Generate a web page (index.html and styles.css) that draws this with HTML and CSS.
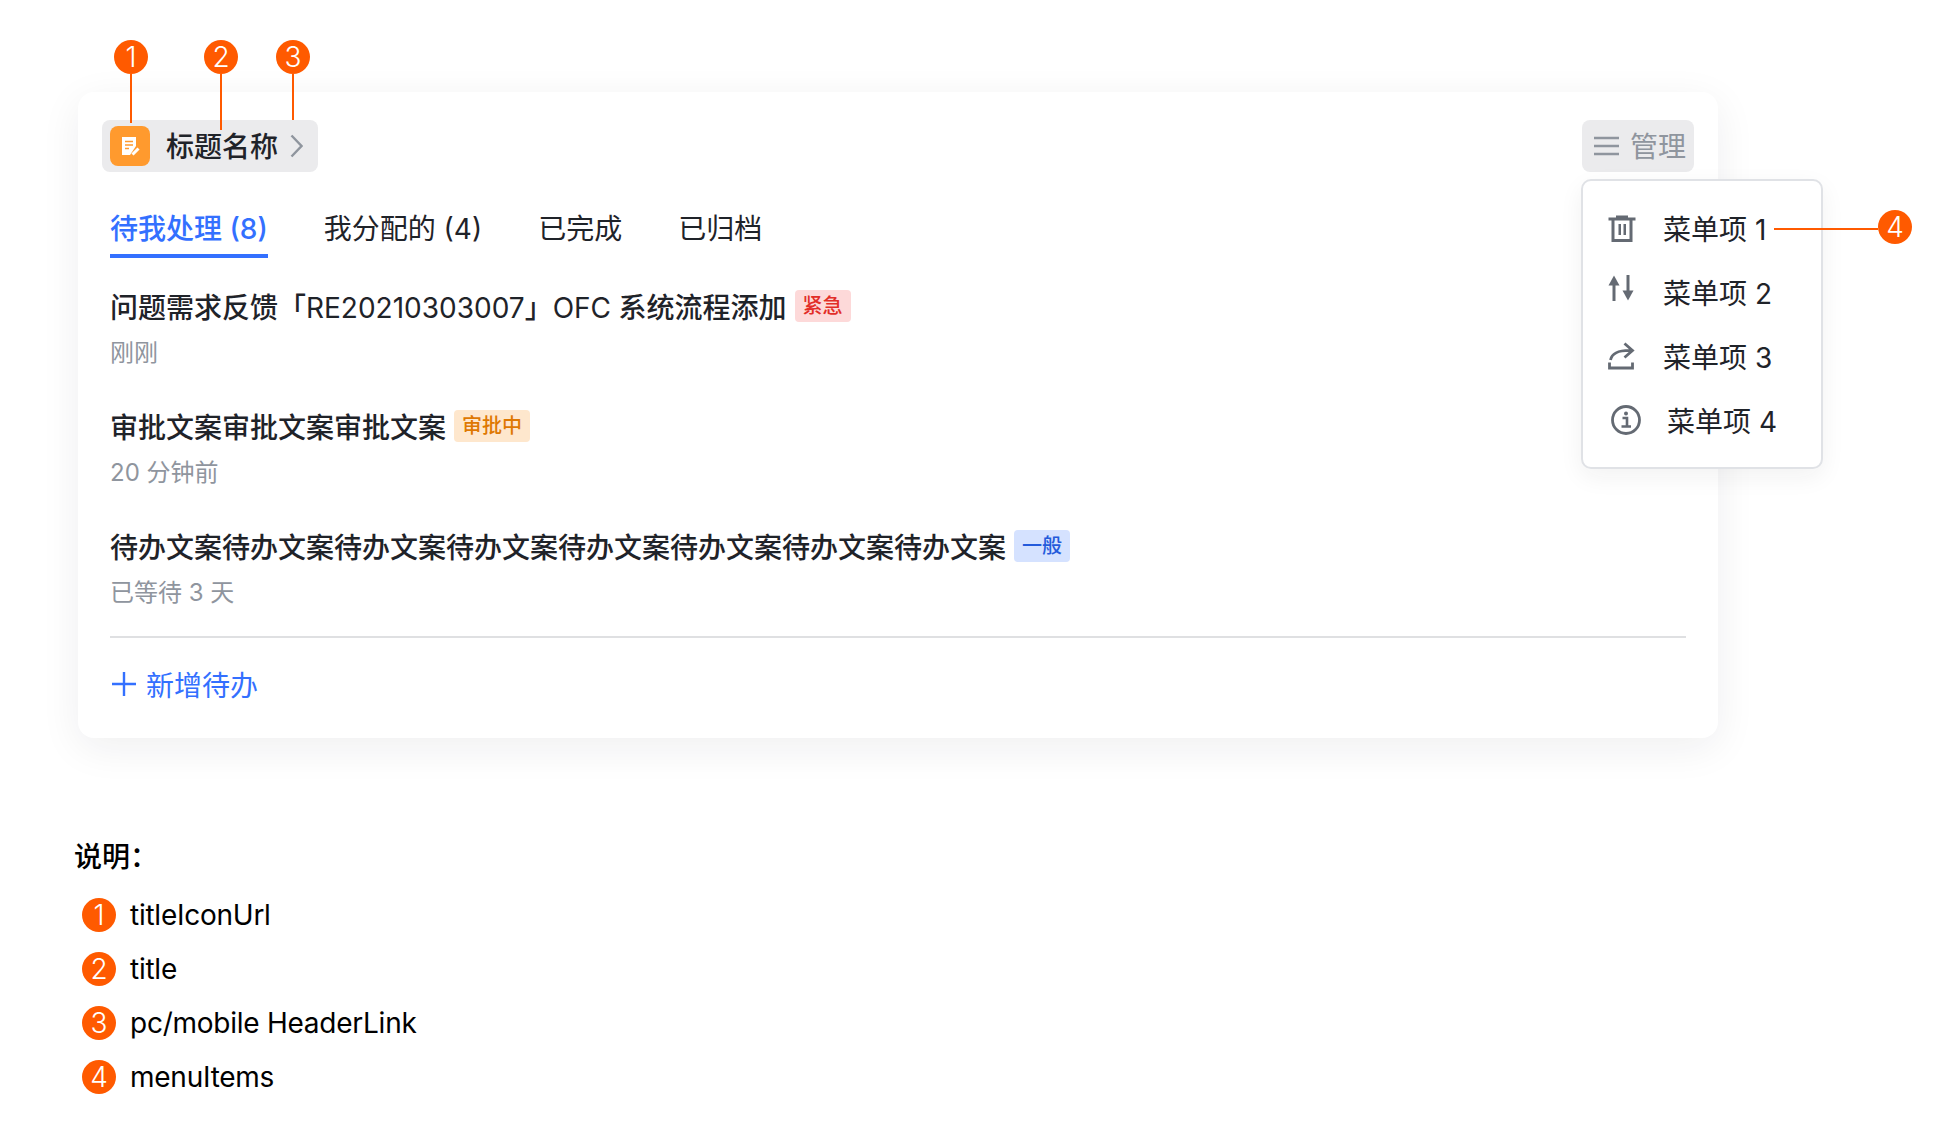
FILE: index.html
```html
<!DOCTYPE html>
<html lang="zh-CN">
<head>
<meta charset="utf-8">
<title>待办卡片</title>
<link rel="stylesheet" href="styles.css">
</head>
<body>
<main class="page">
  <section class="card">
    <header class="card-head">
      <div class="title-chip">
        <span class="title-icon">
          <svg width="20" height="20" viewBox="0 0 20 20"><path d="M2 1h14v9l-6 9H2z" fill="#fff"/><path d="M5 5.500h8M5 9h8M5 12.500h4" stroke="#ff9a2e" stroke-width="1.600" fill="none"/><path d="M12.500 18.500l6-6" stroke="#fff" stroke-width="3" fill="none"/></svg>
        </span>
        <span class="title-text">标题名称</span>
        <svg class="chevron" width="13" height="24" viewBox="0 0 13 24"><path d="M1.500 1.500l10 10.500-10 10.500" stroke="#8f959e" stroke-width="2.400" fill="none"/></svg>
      </div>
      <div class="manage">
        <svg width="25" height="20" viewBox="0 0 25 20"><path d="M0 2h25M0 10h25M0 18h25" stroke="#8f959e" stroke-width="2.400" fill="none"/></svg>
        <span class="manage-text">管理</span>
      </div>
    </header>
    <nav class="tabs">
      <span class="tab active">待我处理 (8)</span>
      <span class="tab">我分配的 (4)</span>
      <span class="tab">已完成</span>
      <span class="tab">已归档</span>
    </nav>
    <ul class="rows">
      <li class="row">
        <div class="row-title"><span>问题需求反馈「<span class="latin">RE20210303007</span>」<span class="latin">OFC</span> 系统流程添加</span><span class="tag tag-red">紧急</span></div>
        <div class="row-sub">刚刚</div>
      </li>
      <li class="row">
        <div class="row-title">审批文案审批文案审批文案<span class="tag tag-orange">审批中</span></div>
        <div class="row-sub">20 分钟前</div>
      </li>
      <li class="row">
        <div class="row-title">待办文案待办文案待办文案待办文案待办文案待办文案待办文案待办文案<span class="tag tag-blue">一般</span></div>
        <div class="row-sub">已等待 3 天</div>
      </li>
    </ul>
    <footer class="card-foot">
      <svg width="24" height="24" viewBox="0 0 24 24"><path d="M12 0v24M0 12h24" stroke="#3370ff" stroke-width="2.400" fill="none"/></svg>
      <span>新增待办</span>
    </footer>
  </section>

  <div class="menu">
    <div class="menu-item">
      <svg class="mi" width="28" height="28" viewBox="0 0 28 28"><path d="M8 4.500V1.500h12v3zM0.500 3.500h27v3H0.500z" fill="#646a73"/><path d="M5 5v21.500h18V5" stroke="#646a73" stroke-width="3" fill="none"/><path d="M10.500 10h2.500v11h-2.500zM15.500 10H18v11h-2.500z" fill="#646a73"/></svg>
      <span>菜单项 1</span>
    </div>
    <div class="menu-item">
      <svg class="mi mi-up" width="28" height="28" viewBox="0 0 28 28"><path d="M6 27V10" stroke="#646a73" stroke-width="3" fill="none"/><path d="M6 1.500l5.500 10h-11z" fill="#646a73"/><path d="M20 1v17" stroke="#646a73" stroke-width="3" fill="none"/><path d="M20 26.500l-5.500-10h11z" fill="#646a73"/></svg>
      <span>菜单项 2</span>
    </div>
    <div class="menu-item">
      <svg class="mi" width="28" height="28" viewBox="0 0 28 28"><path d="M2.500 18C4 11 10 8 24 8.500M16.500 1.500l8 7-8 7M1.500 20.500v5.500h23v-5.500" stroke="#646a73" stroke-width="2.800" fill="none"/></svg>
      <span>菜单项 3</span>
    </div>
    <div class="menu-item menu-item-info">
      <svg class="mi" width="30" height="30" viewBox="0 0 30 30"><circle cx="15" cy="15" r="13.500" stroke="#646a73" stroke-width="2.800" fill="none"/><circle cx="15" cy="8.500" r="2" fill="#646a73"/><path d="M11.500 13h4.500v8.500M10.500 21.500h9.500" stroke="#646a73" stroke-width="2.600" fill="none"/></svg>
      <span>菜单项 4</span>
    </div>
  </div>

  <span class="pin pin-v pin-1"><span class="dot">1</span></span>
  <span class="pin pin-v pin-2"><span class="dot">2</span></span>
  <span class="pin pin-v pin-3"><span class="dot">3</span></span>
  <span class="pin pin-h"><span class="dot">4</span></span>

  <section class="legend">
    <h2 class="legend-title">说明：</h2>
    <ul class="legend-list">
      <li class="legend-item"><span class="dot">1</span><span class="legend-text">titleIconUrl</span></li>
      <li class="legend-item"><span class="dot">2</span><span class="legend-text">title</span></li>
      <li class="legend-item"><span class="dot">3</span><span class="legend-text">pc/mobile HeaderLink</span></li>
      <li class="legend-item"><span class="dot">4</span><span class="legend-text">menuItems</span></li>
    </ul>
  </section>
</main>
</body>
</html>
```
FILE: styles.css
```css
* { box-sizing: border-box; }
html, body { margin: 0; background: #fff; }
body { font-family: Inter, "Noto Sans CJK SC", sans-serif; color: #1f2329; overflow: hidden; }
ul { list-style: none; margin: 0; padding: 0; }
.page { position: relative; width: 1948px; height: 1140px; padding: 92px 0 0 78px; }

.card { width: 1640px; height: 646px; padding: 28px 32px 0; border-radius: 16px; background: #fff; box-shadow: 0 10px 40px rgba(31, 35, 41, .07); }
.card-head { display: flex; justify-content: space-between; align-items: center; height: 52px; margin-left: -8px; margin-right: -8px; }
.title-chip { display: flex; align-items: center; width: 216px; height: 52px; padding-left: 8px; border-radius: 8px; background: #ebebed; }
.title-icon { display: flex; align-items: center; justify-content: center; width: 40px; height: 40px; margin-right: 16px; border-radius: 8px; background: #ff9a2e; }
.title-text { padding-top: 2px; font-size: 28px; font-weight: 500; line-height: 40px; }
.chevron { margin-left: 12px; }
.manage { display: flex; align-items: center; gap: 11px; width: 112px; height: 52px; padding-left: 12px; border-radius: 8px; background: #ebebed; color: #8f959e; font-size: 28px; line-height: 40px; }
.manage-text { padding-top: 2px; }

.tabs { display: flex; gap: 56px; margin-top: 28px; }
.tab { height: 58px; padding-top: 7px; font-size: 28px; line-height: 44px; }
.tab.active { color: #3370ff; font-weight: 500; border-bottom: 4px solid #3370ff; }

.rows { display: flex; flex-direction: column; gap: 32px; margin-top: 26px; padding-bottom: 24px; border-bottom: 2px solid #dfe0e2; }
.row-title { display: flex; align-items: center; height: 44px; font-size: 28px; font-weight: 500; white-space: nowrap; }
.latin { font-weight: 400; }
.row-sub { height: 40px; margin-top: 4px; padding-top: 1px; color: #8f959e; font-size: 24px; line-height: 40px; }
.tag { margin-left: 8px; height: 32px; padding: 0 8px; border-radius: 4px; font-size: 20px; font-weight: 500; line-height: 32px; }
.tag-red { background: #fdd9d9; color: #e22e28; }
.tag-orange { background: #fee7cd; color: #de7802; }
.tag-blue { background: #d5e2ff; color: #245bdb; }

.card-foot { display: flex; align-items: center; gap: 10px; height: 44px; margin-top: 24px; margin-left: 2px; color: #3370ff; font-size: 28px; }

.menu { position: absolute; left: 1581px; top: 179px; width: 242px; height: 290px; padding: 15px 0 0 25px; border: 2px solid #e0e2e6; border-radius: 10px; background: #fff; box-shadow: 0 8px 24px rgba(31, 35, 41, .06); }
.menu-item { display: flex; align-items: center; gap: 27px; height: 64px; font-size: 28px; white-space: nowrap; }
.menu-item-info { gap: 26px; margin-left: 3px; }
.mi { flex: none; }
.mi-up { position: relative; top: -4px; }

.dot { display: flex; flex: none; align-items: center; justify-content: center; width: 34px; height: 34px; border-radius: 50%; background: #ff5a00; color: #fff; font-family: Inter, sans-serif; font-size: 28px; font-weight: 300; line-height: 34px; }
.pin { position: absolute; background: #ff5a00; }
.pin .dot { position: absolute; }
.pin-v { top: 74px; width: 2px; }
.pin-v .dot { left: -16px; top: -34px; }
.pin-1 { left: 130px; height: 49px; }
.pin-2 { left: 220px; height: 56px; }
.pin-3 { left: 292px; height: 46px; }
.pin-h { left: 1774px; top: 228px; width: 104px; height: 2px; }
.pin-h .dot { left: 104px; top: -18px; }

.legend { position: absolute; left: 74px; top: 837px; color: #000; }
.legend-title { margin: 0; font-size: 28px; font-weight: 500; line-height: 40px; }
.legend-list { margin: 21px 0 0 8px; display: flex; flex-direction: column; gap: 20px; }
.legend-item { display: flex; align-items: center; gap: 14px; height: 34px; font-size: 28px; font-weight: 400; }
.legend-text { letter-spacing: -.25px; }
```
